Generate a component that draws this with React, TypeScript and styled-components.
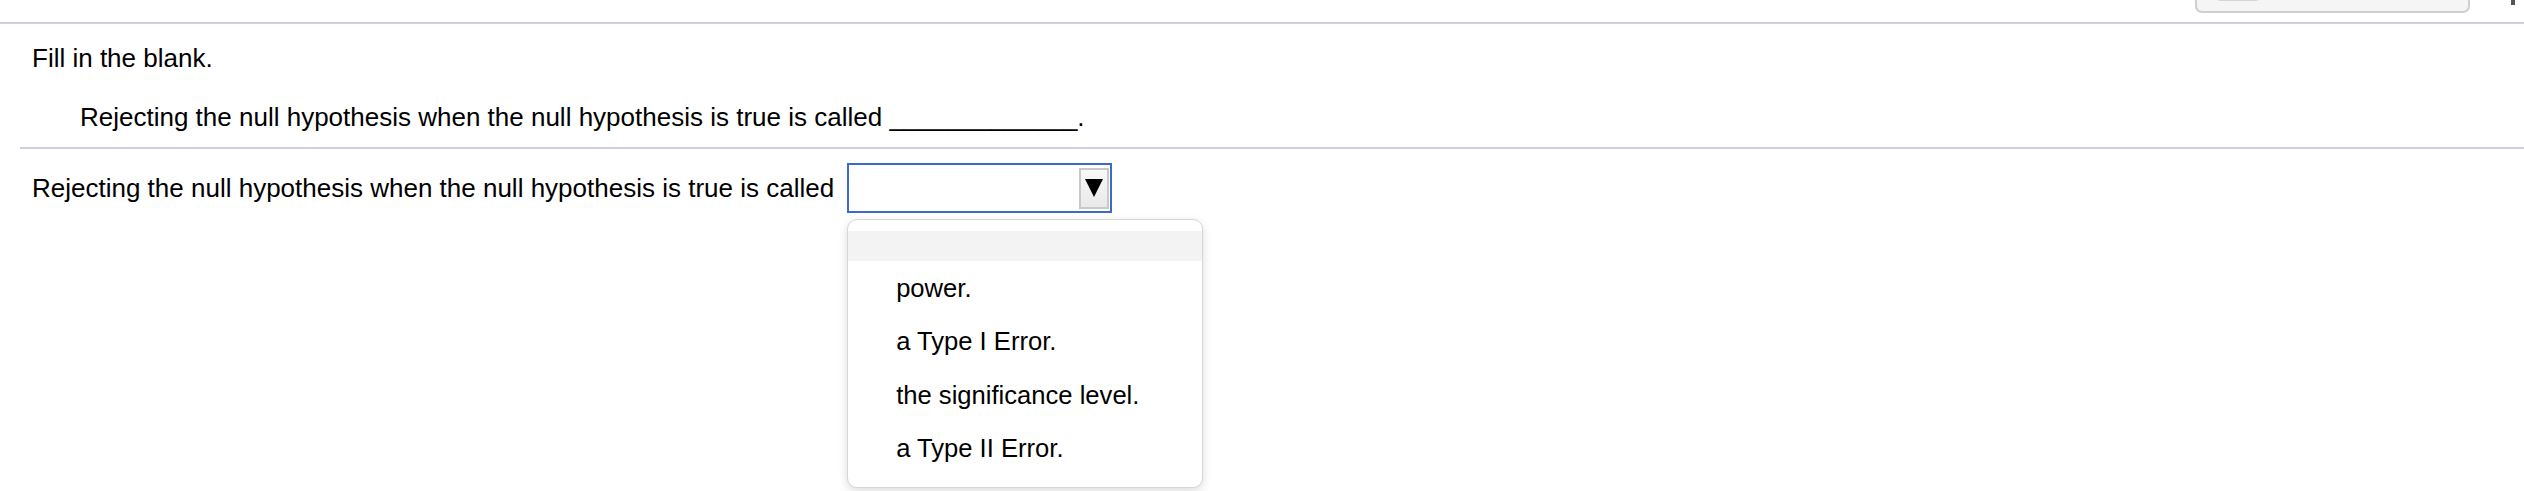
// Fill in the blank question

// ___________________________________________________________________

import * as React from 'react'
import styled, { createGlobalStyle } from 'styled-components'

// ___________________________________________________________________

const options = [
  'power.',
  'a Type I Error.',
  'the significance level.',
  'a Type II Error.'
]

const prompt =
  'Rejecting the null hypothesis when the null hypothesis is true is called'

const App: React.FC = () => {
  return (
    <Page>
      <GlobalStyle />
      <TopBar>
        <TopBox>
          <TopBoxPill />
        </TopBox>
        <TopMark />
      </TopBar>
      <Rule />
      <Question>
        <Instruction>Fill in the blank.</Instruction>
        <Prompt>
          {prompt} <span>_____________</span>.
        </Prompt>
      </Question>
      <Rule inset={20} />
      <AnswerRow>
        <span>{prompt}</span>
        <SelectWrap>
          <SelectBox>
            <ArrowButton>
              <Triangle />
            </ArrowButton>
          </SelectBox>
          <Menu>
            <Option empty />
            {options.map(o => (
              <Option key={o}>{o}</Option>
            ))}
          </Menu>
        </SelectWrap>
      </AnswerRow>
    </Page>
  )
}

export default App

// ___________________________________________________________________

const GlobalStyle = createGlobalStyle`
  html, body {
    margin: 0;
    padding: 0;
    background: #fff;
  }
`

const Page = styled.div`
  width: 2524px;
  height: 491px;
  overflow: hidden;
  background: #fff;
  color: #000;
  font-family: 'Liberation Sans', Arial, Helvetica, sans-serif;
  font-size: 26px;
`

const TopBar = styled.div`
  height: 22px;
  display: flex;
  justify-content: flex-end;
  align-items: flex-end;
  overflow: hidden;
`

const TopBox = styled.div`
  position: relative;
  width: 275px;
  height: 40px;
  margin-bottom: 9px;
  box-sizing: border-box;
  border: 2px solid #cfcfcf;
  border-radius: 7px;
  background: #f5f5f5;
`

const TopBoxPill = styled.div`
  position: absolute;
  left: 20px;
  bottom: 10px;
  width: 42px;
  height: 8px;
  border-radius: 3px;
  background: #d6d6d6;
`

const TopMark = styled.div`
  width: 4px;
  height: 5px;
  margin: 0 9px 17px 41px;
  background: #555;
`

const Rule = styled.div<{ inset?: number }>`
  height: 2px;
  margin-left: ${p => p.inset || 0}px;
  background: #ced1de;
`

const Question = styled.div`
  padding: 19px 0 15px 32px;
  line-height: 30px;
`

const Instruction = styled.div`
  margin-bottom: 29px;
`

const Prompt = styled.div`
  padding-left: 48px;
`

const AnswerRow = styled.div`
  display: flex;
  align-items: center;
  gap: 13px;
  padding: 14px 0 0 32px;
  line-height: 30px;
`

const SelectWrap = styled.div`
  position: relative;
`

const SelectBox = styled.div`
  width: 265px;
  height: 50px;
  box-sizing: border-box;
  border: 2px solid #3a6bc8;
  display: flex;
  align-items: center;
  justify-content: flex-end;
  padding-right: 1px;
`

const ArrowButton = styled.div`
  width: 30px;
  height: 41px;
  box-sizing: border-box;
  border: 2px solid #c9c9c9;
  background: linear-gradient(#f8f8f8, #e9e9e9);
  display: flex;
  align-items: center;
  justify-content: center;
`

const Triangle = styled.div`
  width: 0;
  height: 0;
  border-left: 9px solid transparent;
  border-right: 9px solid transparent;
  border-top: 18px solid #000;
`

const Menu = styled.div`
  position: absolute;
  top: 56px;
  left: 0;
  width: 356px;
  box-sizing: border-box;
  padding: 11px 0 12px;
  background: #fff;
  border: 1px solid #d6d6d6;
  border-radius: 10px;
  box-shadow: 0 3px 10px rgba(0, 0, 0, 0.14);
`

const Option = styled.div<{ empty?: boolean }>`
  height: ${p => (p.empty ? 30 : 53.5)}px;
  display: flex;
  align-items: center;
  padding-left: 48px;
  background: ${p => (p.empty ? '#f3f3f3' : '#fff')};
  font-size: 25.6px;
`
